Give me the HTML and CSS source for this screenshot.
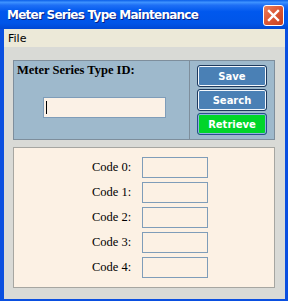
FILE: index.html
```html
<!DOCTYPE html>
<html>
<head>
<meta charset="utf-8">
<link rel="stylesheet" href="styles.css">
</head>
<body>
<div class="window">
  <div class="titlebar">
    <span class="title">Meter Series Type Maintenance</span>
    <span class="close">
      <svg width="13" height="13" viewBox="0 0 13 13"><path d="M2 2 L11 11 M11 2 L2 11" stroke="#fff" stroke-width="2.4" stroke-linecap="square"/></svg>
    </span>
  </div>
  <div class="menubar"><span class="menu-item">File</span></div>
  <div class="client">
    <div class="top">
      <div class="id-section">
        <div class="id-label">Meter Series Type ID:</div>
        <div class="id-input"><span class="caret"></span></div>
      </div>
      <div class="btn-section">
        <div class="btn btn-blue">Save</div>
        <div class="btn btn-blue">Search</div>
        <div class="btn btn-green">Retrieve</div>
      </div>
    </div>
    <div class="codes">
      <div class="code-grid">
        <span class="code-label">Code 0:</span><span class="code-input"></span>
        <span class="code-label">Code 1:</span><span class="code-input"></span>
        <span class="code-label">Code 2:</span><span class="code-input"></span>
        <span class="code-label">Code 3:</span><span class="code-input"></span>
        <span class="code-label">Code 4:</span><span class="code-input"></span>
      </div>
    </div>
  </div>
</div>
</body>
</html>
```

FILE: styles.css
```css
html, body {
  margin: 0;
  padding: 0;
}
body {
  width: 288px;
  height: 301px;
  overflow: hidden;
}
.window {
  width: 288px;
  height: 301px;
  box-sizing: border-box;
  display: flex;
  flex-direction: column;
  background: #0A4FE0;
  padding: 0 3px 3px 4px;
}
.titlebar {
  height: 29px;
  margin: 0 -3px 0 -4px;
  background: linear-gradient(to bottom, #0A5EE8 0%, #3E93FF 8%, #1E6FF5 18%, #0058EE 40%, #0055E8 80%, #0048D4 100%);
  display: flex;
  align-items: center;
  justify-content: space-between;
  padding: 0 4px 0 7px;
  flex: none;
}
.title {
  font-family: "DejaVu Sans", sans-serif;
  font-weight: bold;
  font-size: 12px;
  letter-spacing: -0.75px;
  color: #fff;
  text-shadow: 1px 1px 0 #0A1F80;
  margin-top: 1px;
}
.close {
  width: 19px;
  height: 19px;
  border: 1px solid #fff;
  border-radius: 3px;
  background: linear-gradient(135deg, #E9805E 0%, #DD5A38 45%, #C8401F 100%);
  display: flex;
  align-items: center;
  justify-content: center;
  margin-top: 2px;
}
.menubar {
  height: 18px;
  background: #ECE9D8;
  display: flex;
  align-items: center;
  flex: none;
}
.menu-item {
  font-family: "DejaVu Sans", sans-serif;
  font-size: 11px;
  color: #000;
  margin-left: 4px;
}
.client {
  flex: 1;
  background: #D9DAD6;
  padding: 13px 10px 11px 9px;
  display: flex;
  flex-direction: column;
}
.top {
  height: 80px;
  box-sizing: border-box;
  border: 1px solid #7E8E9C;
  background: #9EB9CC;
  display: flex;
  flex: none;
}
.id-section {
  width: 172px;
  border-right: 1px solid #7E8E9C;
  padding: 2px 0 0 3px;
  box-sizing: content-box;
}
.id-label {
  font-family: "Liberation Serif", serif;
  font-weight: bold;
  font-size: 12.5px;
  line-height: 14px;
  color: #000;
}
.id-input {
  margin: 20px 0 0 26px;
  width: 121px;
  height: 19px;
  border: 1px solid #7F9DB9;
  background: #FBF1E6;
  display: flex;
  align-items: center;
}
.caret {
  width: 1px;
  height: 13px;
  background: #000;
  margin-left: 2px;
}
.btn-section {
  flex: 1;
  display: flex;
  flex-direction: column;
  align-items: center;
  padding-top: 4px;
  gap: 2px;
}
.btn {
  width: 68px;
  height: 20px;
  border: 1px solid #1E3A5E;
  border-radius: 3px;
  box-shadow: inset 0 0 0 1px #F4F8FC;
  font-family: "DejaVu Sans", sans-serif;
  font-weight: bold;
  font-size: 10px;
  color: #fff;
  display: flex;
  align-items: center;
  justify-content: center;
}
.btn-blue {
  background: #4A80B5;
}
.btn-green {
  background: #00D52A;
  border-color: #2B4D8E;
  box-shadow: inset 0 0 0 1px #8FB0E0;
}
.codes {
  margin-top: 7px;
  height: 141px;
  box-sizing: border-box;
  border: 1px solid #A6A6A1;
  background: #FCF1E4;
  padding: 9px 0 0 78px;
  flex: none;
}
.code-grid {
  display: grid;
  grid-template-columns: 50px 66px;
  grid-auto-rows: 21px;
  row-gap: 4px;
  align-items: center;
}
.code-label {
  font-family: "Liberation Serif", serif;
  font-size: 12.5px;
  color: #000;
}
.code-input {
  height: 21px;
  box-sizing: border-box;
  border: 1px solid #7F9DB9;
  background: #FCF1E4;
}
```
